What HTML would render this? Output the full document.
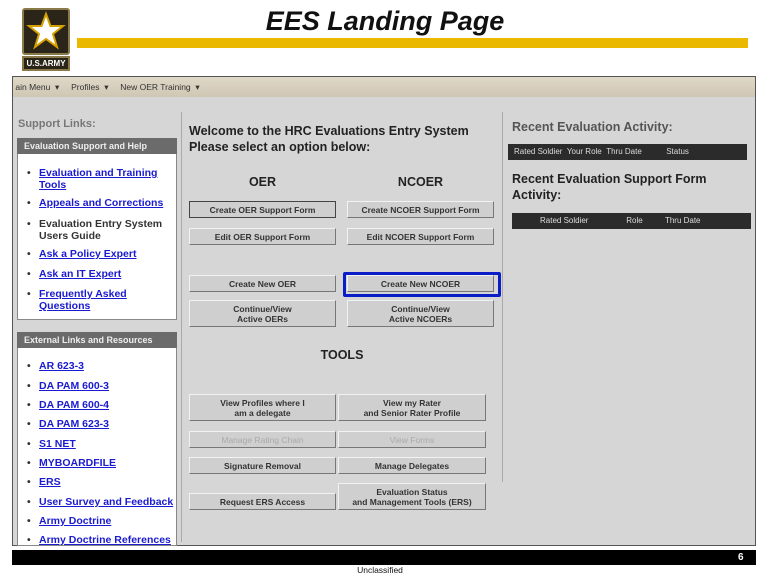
<!DOCTYPE html>
<html><head><meta charset="utf-8"><style>
*{margin:0;padding:0;box-sizing:border-box}
body{width:768px;height:576px;background:#fff;position:relative;overflow:hidden;font-family:"Liberation Sans",Arial,sans-serif}
.a{position:absolute}
.btn{position:absolute;background:#cfcfcf;border:1px solid #f2f2f2;border-right-color:#777;border-bottom-color:#777;font-size:8.5px;font-weight:bold;color:#333;text-align:center;display:flex;align-items:center;justify-content:center;line-height:10px}
.li{position:absolute;left:28px;font-size:10.5px;font-weight:bold;line-height:12px}
.li a{color:#1a1ad0;text-decoration:underline}
.li:before{content:"•";position:absolute;left:-1px;color:#333}
.li span{margin-left:11px;display:block}
.hdr{position:absolute;background:#6b6b6b;color:#eee;font-size:9px;font-weight:bold;padding-left:7px;line-height:16px}
.bar{position:absolute;background:#2b2b2b;color:#ddd;font-size:8px;line-height:16px}
</style></head><body>
<!-- logo -->
<div class="a" style="left:22px;top:8px;width:48px;height:47px;background:#2a2518;border:2px solid #8a7a4a;border-radius:3px"></div>
<svg class="a" style="left:26px;top:11px" width="40" height="40" viewBox="0 0 40 40"><polygon points="20,3 24.5,15 37,15 27,23 31,36 20,28 9,36 13,23 3,15 15.5,15" fill="#fff" stroke="#d4a000" stroke-width="2"/></svg>
<div class="a" style="left:22px;top:56px;width:48px;height:15px;background:#2a2518;border:2px solid #8a7a4a;color:#fff;font-size:8px;font-weight:bold;text-align:center;line-height:11px">U.S.ARMY</div>
<div class="a" style="left:77px;top:38px;width:671px;height:10px;background:#ebb800"></div>
<div class="a" style="left:160px;top:6px;width:450px;text-align:center;font-size:27px;font-weight:bold;font-style:italic;color:#111">EES Landing Page</div>
<!-- frame -->
<div class="a" style="left:12px;top:76px;width:744px;height:470px;background:#d6d6d6;border:1px solid #555"></div>
<div class="a" style="left:13px;top:77px;width:742px;height:20px;background:linear-gradient(#e0d8c8,#cfc6b4);font-size:8.5px;color:#333;line-height:20px;padding-left:0">&nbsp;ain Menu &nbsp;▾ &nbsp;&nbsp;&nbsp;&nbsp;Profiles &nbsp;▾ &nbsp;&nbsp;&nbsp;&nbsp;New OER Training &nbsp;▾</div>
<div class="a" style="left:181px;top:112px;width:1px;height:430px;background:#aaa"></div>
<div class="a" style="left:502px;top:112px;width:1px;height:370px;background:#aaa"></div>
<!-- left -->
<div class="a" style="left:18px;top:118px;font-size:11px;font-weight:bold;color:#777">Support Links:</div>
<div class="a" style="left:17px;top:138px;width:160px;height:182px;background:#fff;border:1px solid #888"></div>
<div class="hdr" style="left:17px;top:138px;width:160px">Evaluation Support and Help</div>
<div class="li" style="top:167px"><span><a>Evaluation and Training<br>Tools</a></span></div>
<div class="li" style="top:197px"><span><a>Appeals and Corrections</a></span></div>
<div class="li" style="top:218px;color:#333"><span>Evaluation Entry System<br>Users Guide</span></div>
<div class="li" style="top:248px"><span><a>Ask a Policy Expert</a></span></div>
<div class="li" style="top:268px"><span><a>Ask an IT Expert</a></span></div>
<div class="li" style="top:288px"><span><a>Frequently Asked<br>Questions</a></span></div>
<div class="a" style="left:17px;top:332px;width:160px;height:214px;background:#fff;border:1px solid #888"></div>
<div class="hdr" style="left:17px;top:332px;width:160px">External Links and Resources</div>
<div class="li" style="top:360px"><span><a>AR 623-3</a></span></div>
<div class="li" style="top:380px"><span><a>DA PAM 600-3</a></span></div>
<div class="li" style="top:399px"><span><a>DA PAM 600-4</a></span></div>
<div class="li" style="top:418px"><span><a>DA PAM 623-3</a></span></div>
<div class="li" style="top:438px"><span><a>S1 NET</a></span></div>
<div class="li" style="top:457px"><span><a>MYBOARDFILE</a></span></div>
<div class="li" style="top:476px"><span><a>ERS</a></span></div>
<div class="li" style="top:496px"><span><a>User Survey and Feedback</a></span></div>
<div class="li" style="top:515px"><span><a>Army Doctrine</a></span></div>
<div class="li" style="top:534px"><span><a>Army Doctrine References</a></span></div>
<!-- center -->
<div class="a" style="left:189px;top:123px;font-size:12.5px;font-weight:bold;color:#222;line-height:16px">Welcome to the HRC Evaluations Entry System<br>Please select an option below:</div>
<div class="a" style="left:189px;top:175px;width:147px;text-align:center;font-size:12.5px;font-weight:bold;color:#222">OER</div>
<div class="a" style="left:347px;top:175px;width:147px;text-align:center;font-size:12.5px;font-weight:bold;color:#222">NCOER</div>
<div class="btn" style="left:189px;top:201px;width:147px;height:17px;border:1px solid #444">Create OER Support Form</div>
<div class="btn" style="left:347px;top:201px;width:147px;height:17px">Create NCOER Support Form</div>
<div class="btn" style="left:189px;top:228px;width:147px;height:17px">Edit OER Support Form</div>
<div class="btn" style="left:347px;top:228px;width:147px;height:17px">Edit NCOER Support Form</div>
<div class="btn" style="left:189px;top:275px;width:147px;height:17px">Create New OER</div>
<div class="a" style="left:343px;top:272px;width:158px;height:25px;border:3px solid #0a1ec8;border-radius:2px"></div>
<div class="btn" style="left:347px;top:275px;width:147px;height:17px">Create New NCOER</div>
<div class="btn" style="left:189px;top:300px;width:147px;height:27px">Continue/View<br>Active OERs</div>
<div class="btn" style="left:347px;top:300px;width:147px;height:27px">Continue/View<br>Active NCOERs</div>
<div class="a" style="left:189px;top:348px;width:306px;text-align:center;font-size:12.5px;font-weight:bold;color:#222">TOOLS</div>
<div class="btn" style="left:189px;top:394px;width:147px;height:27px">View Profiles where I<br>am a delegate</div>
<div class="btn" style="left:338px;top:394px;width:148px;height:27px">View my Rater<br>and Senior Rater Profile</div>
<div class="btn" style="left:189px;top:431px;width:147px;height:17px;color:#aaa;font-weight:normal">Manage Rating Chain</div>
<div class="btn" style="left:338px;top:431px;width:148px;height:17px;color:#aaa;font-weight:normal">View Forms</div>
<div class="btn" style="left:189px;top:457px;width:147px;height:17px">Signature Removal</div>
<div class="btn" style="left:338px;top:457px;width:148px;height:17px">Manage Delegates</div>
<div class="btn" style="left:189px;top:493px;width:147px;height:17px">Request ERS Access</div>
<div class="btn" style="left:338px;top:483px;width:148px;height:27px">Evaluation Status<br>and Management Tools (ERS)</div>
<!-- right -->
<div class="a" style="left:512px;top:120px;font-size:12.5px;font-weight:bold;color:#555">Recent Evaluation Activity:</div>
<div class="bar" style="left:508px;top:144px;width:239px;padding-left:6px">Rated Soldier &nbsp;Your Role &nbsp;Thru Date &nbsp;&nbsp;&nbsp;&nbsp;&nbsp;&nbsp;&nbsp;&nbsp;&nbsp;&nbsp;Status</div>
<div class="a" style="left:512px;top:171px;font-size:12.5px;font-weight:bold;color:#222;line-height:16px">Recent Evaluation Support Form<br>Activity:</div>
<div class="bar" style="left:512px;top:213px;width:239px;padding-left:28px">Rated Soldier &nbsp;&nbsp;&nbsp;&nbsp;&nbsp;&nbsp;&nbsp;&nbsp;&nbsp;&nbsp;&nbsp;&nbsp;&nbsp;&nbsp;&nbsp;&nbsp;Role &nbsp;&nbsp;&nbsp;&nbsp;&nbsp;&nbsp;&nbsp;&nbsp;&nbsp;Thru Date</div>
<!-- footer -->
<div class="a" style="left:12px;top:550px;width:744px;height:15px;background:#000"></div>
<div class="a" style="left:738px;top:550px;font-size:10px;font-weight:bold;color:#fff;line-height:15px">6</div>
<div class="a" style="left:330px;top:565px;width:100px;text-align:center;font-size:8.5px;color:#111">Unclassified</div>
</body></html>
